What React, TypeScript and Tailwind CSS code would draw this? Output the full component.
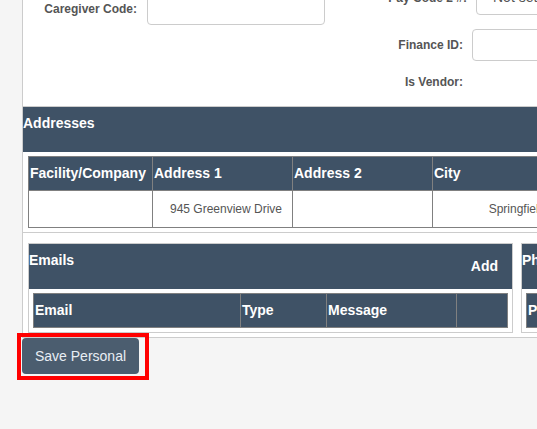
export default function App() {
  const dark = 'bg-[#3f5266]';
  return (
    <div className="relative h-[429px] w-[537px] overflow-hidden bg-[#f5f5f5] font-['Liberation_Sans',Arial,sans-serif]">
      <div className="ml-[22px] w-[900px] border-b border-l border-[#ccc] bg-white">
        {/* personal fields, top half scrolled out of view */}
        <div className="flex h-[106px] items-start">
          <div className="mt-[-8px] flex h-[33px] shrink-0 items-center">
            <div className="w-[114px] text-right text-[12px] font-bold text-[#555]">Caregiver Code:</div>
            <div className="ml-[10px] h-[33px] w-[178px] rounded-[4px] border border-[#ccc] bg-white" />
          </div>
          <div className="ml-[15px] mt-[-20px] flex shrink-0 flex-col">
            <div className="flex h-[35px] items-center pl-[4px]">
              <div className="w-[123px] text-right text-[12px] font-bold text-[#555]">Pay Code 2 #:</div>
              <div className="ml-[9px] flex h-[35px] w-[200px] items-center rounded-[4px] border border-[#ccc] bg-white pl-[16px] text-[14px] text-[#555]">
                Not set
              </div>
            </div>
            <div className="mt-[14px] flex h-[32px] items-center">
              <div className="w-[123px] text-right text-[12px] font-bold text-[#555]">Finance ID:</div>
              <div className="ml-[9px] h-[32px] w-[200px] rounded-[4px] border border-[#ccc] bg-white" />
            </div>
            <div className="mt-[5px] flex h-[32px] items-center">
              <div className="w-[123px] text-right text-[12px] font-bold text-[#555]">Is Vendor:</div>
            </div>
          </div>
        </div>

        {/* Addresses */}
        <div className="border-y border-[#ccc]">
          <div className={`${dark} h-[45px] pt-[8px] text-[14px] font-bold leading-[16px] text-white`}>Addresses</div>
          <div className="px-[5px] py-[4px]">
            <div className="w-[700px] border border-[#808080] text-[14px]">
              <div className={`flex h-[33px] ${dark} font-bold text-white`}>
                <div className="flex w-[124px] shrink-0 items-center border-r border-[#808080] pl-[1px]">Facility/Company</div>
                <div className="flex w-[140px] shrink-0 items-center border-r border-[#808080] pl-[1px]">Address 1</div>
                <div className="flex w-[140px] shrink-0 items-center border-r border-[#808080] pl-[1px]">Address 2</div>
                <div className="flex w-[168px] shrink-0 items-center pl-[1px]">City</div>
              </div>
              <div className="flex h-[37px] border-t border-[#808080] text-[12px] text-[#555]">
                <div className="w-[124px] shrink-0 border-r border-[#808080]" />
                <div className="flex w-[140px] shrink-0 items-center justify-center border-r border-[#808080] pl-[7px]">945 Greenview Drive</div>
                <div className="w-[140px] shrink-0 border-r border-[#808080]" />
                <div className="flex w-[168px] shrink-0 items-center justify-center">Springfield</div>
              </div>
            </div>
          </div>
        </div>

        {/* Emails / Phones */}
        <div className="flex gap-[8px] pb-[4px] pl-[5px] pt-[10px]">
          <div className="w-[485px] shrink-0 border border-[#ccc]">
            <div className={`${dark} flex h-[45px] items-start justify-between text-[14px] font-bold leading-[16px] text-white`}>
              <span className="pt-[8px]">Emails</span>
              <span className="mr-[14px] pt-[14px]">Add</span>
            </div>
            <div className="p-[4px]">
              <div className={`flex h-[35px] border border-[#808080] ${dark} text-[14px] font-bold text-white`}>
                <div className="flex w-[207px] items-center border-r border-[#808080] pl-[1px]">Email</div>
                <div className="flex w-[86px] items-center border-r border-[#808080] pl-[1px]">Type</div>
                <div className="flex w-[130px] items-center border-r border-[#808080] pl-[1px]">Message</div>
                <div className="flex-1" />
              </div>
            </div>
          </div>
          <div className="w-[300px] shrink-0 border border-[#ccc]">
            <div className={`${dark} h-[45px] pt-[8px] text-[14px] font-bold leading-[16px] text-white`}>Phones</div>
            <div className="p-[4px]">
              <div className={`flex h-[35px] items-center border border-[#808080] ${dark} pl-[1px] text-[14px] font-bold text-white`}>
                Phone
              </div>
            </div>
          </div>
        </div>
      </div>

      <button className="ml-[22px] h-[36px] w-[117px] rounded-[4px] bg-[#4b5d6f] text-[14px] text-[#e8eef4]">
        Save Personal
      </button>

      {/* highlight annotation */}
      <div className="pointer-events-none absolute left-[17px] top-[333px] h-[47px] w-[132px] border-[4px] border-[#ff0000]" />
    </div>
  );
}
